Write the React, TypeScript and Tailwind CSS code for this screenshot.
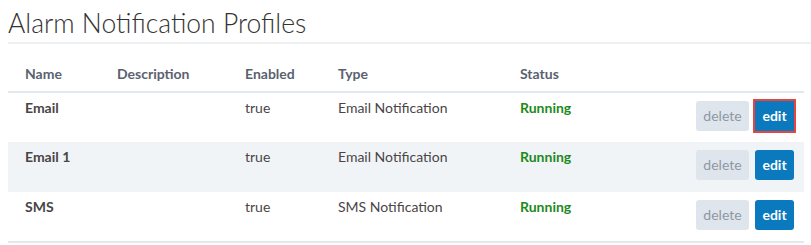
import React from "react";

type Profile = {
  name: string;
  description: string;
  enabled: string;
  type: string;
  status: string;
  focused?: boolean;
};

const profiles: Profile[] = [
  { name: "Email", description: "", enabled: "true", type: "Email Notification", status: "Running", focused: true },
  { name: "Email 1", description: "", enabled: "true", type: "Email Notification", status: "Running" },
  { name: "SMS", description: "", enabled: "true", type: "SMS Notification", status: "Running" },
];

export default function App() {
  return (
    <div className="w-[811px] h-[245px] bg-white font-['Lato','Liberation_Sans',sans-serif] overflow-hidden">
      <div className="pl-2 pr-0">
        <h1 className="text-[26.5px] font-light text-[#333] leading-none pt-[10px] pb-[5px] border-b-2 border-[#eef1f4]">
          Alarm Notification Profiles
        </h1>
      </div>

      <table className="ml-2 mt-[16px] w-[796px] border-collapse text-[14px]">
        <thead>
          <tr className="border-b-2 border-[#e3e8ee] text-left text-[#5a6270] font-bold">
            <th className="w-[109px] pl-[17px] h-[32px] pb-[4px] font-bold">Name</th>
            <th className="w-[128px] font-bold pb-[4px]">Description</th>
            <th className="w-[93px] font-bold pb-[4px]">Enabled</th>
            <th className="w-[182px] font-bold pb-[4px]">Type</th>
            <th className="w-[120px] font-bold pb-[4px]">Status</th>
            <th></th>
          </tr>
        </thead>
        <tbody>
          {profiles.map((p, i) => (
            <tr key={p.name} className={i % 2 === 1 ? "bg-[#f1f4f7]" : "bg-white"}>
              <td className="pl-[17px] align-top pt-[4px] h-[50px] font-bold text-[#4a4546]">{p.name}</td>
              <td className="align-top pt-[4px] text-[#4a4546]">{p.description}</td>
              <td className="align-top pt-[4px] text-[#4a4546]">{p.enabled}</td>
              <td className="align-top pt-[4px] text-[#4a4546]">{p.type}</td>
              <td className="align-top pt-[4px] font-bold text-[#1d8a1d]">{p.status}</td>
              <td className="align-top pt-[8px] pr-[10px]">
                <div className="flex justify-end gap-[6px]">
                  <button className="h-[30px] w-[53px] rounded-[3px] bg-[#dfe5ec] text-[#8d98a5] text-[14px]">
                    delete
                  </button>
                  <button
                    className={`h-[30px] w-[39px] rounded-[3px] bg-[#0a79bd] text-white font-bold text-[14px] ${
                      p.focused ? "outline-[2.5px] outline-solid outline-[#e8453c] outline-offset-0 rounded-none" : ""
                    }`}
                  >
                    edit
                  </button>
                </div>
              </td>
            </tr>
          ))}
          <tr className="border-t-2 border-[#e3e8ee]">
            <td colSpan={6}></td>
          </tr>
        </tbody>
      </table>
    </div>
  );
}
